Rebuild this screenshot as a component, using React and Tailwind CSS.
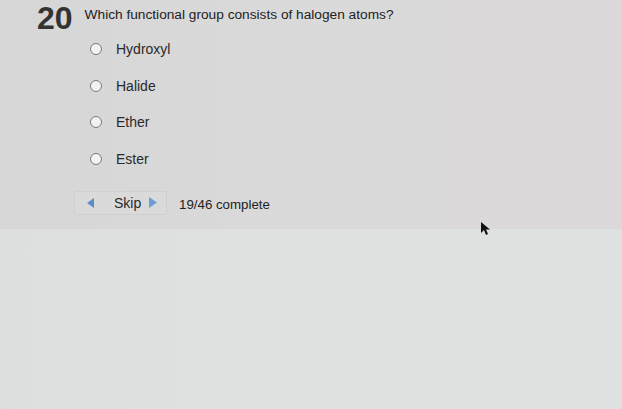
import React from "react";

const options = ["Hydroxyl", "Halide", "Ether", "Ester"];

function Radio() {
  return (
    <span className="block w-[12px] h-[12px] rounded-full border-[1.5px] border-[#7a7a7a] bg-[#f2f2f2] shrink-0" />
  );
}

export default function App() {
  return (
    <div
      className="relative w-[622px] h-[409px] overflow-hidden flex flex-col"
      style={{ fontFamily: '"Liberation Sans", Arial, sans-serif' }}
    >
      <div className="h-[229px] bg-gradient-to-r from-[#d6d6d6] via-[#dadada] to-[#dcd8d9] flex flex-col">
        <div className="flex items-start pl-[37px] h-[34px]">
          <span className="text-[32px] leading-[36px] font-bold text-[#333]">20</span>
          <span className="text-[13.7px] leading-[16px] text-[#222] ml-[12px] mt-[7px]">
            Which functional group consists of halogen atoms?
          </span>
        </div>
        <div className="flex flex-col gap-[20.5px] mt-[7px] pl-[90px]">
          {options.map((o) => (
            <div key={o} className="flex items-center h-[16px]">
              <Radio />
              <span className="ml-[14px] text-[14px] leading-[16px] text-[#2a2a2a]">{o}</span>
            </div>
          ))}
        </div>
        <div className="flex items-center mt-[24px] pl-[74px]">
          <div className="flex items-center w-[93px] h-[24px] border border-[#cfcfcf] bg-[#dadada] rounded-[2px]">
            <svg width="7" height="10" viewBox="0 0 7 10" className="ml-[12px]">
              <polygon points="7,0 7,10 0,5" fill="#5a8fc6" />
            </svg>
            <span className="ml-[20px] text-[14px] leading-[16px] text-[#2a2a2a]">Skip</span>
            <svg width="8" height="11" viewBox="0 0 8 11" className="ml-[8px]">
              <polygon points="0,0 0,11 8,5.5" fill="#6b9ed3" />
            </svg>
          </div>
          <span className="ml-[12px] mt-[4px] text-[13.3px] leading-[16px] text-[#222]">19/46 complete</span>
        </div>
      </div>
      <div className="flex-1 bg-gradient-to-r from-[#dcdfde] via-[#e0e2e2] to-[#dfe1e0]" />
      <svg
        className="absolute left-[481px] top-[222px]"
        width="10"
        height="14"
        viewBox="0 0 10 14"
      >
        <polygon points="0,0 0,11 3,8 5,13 7,12 5,7.5 9,7.5" fill="#111" />
      </svg>
    </div>
  );
}
